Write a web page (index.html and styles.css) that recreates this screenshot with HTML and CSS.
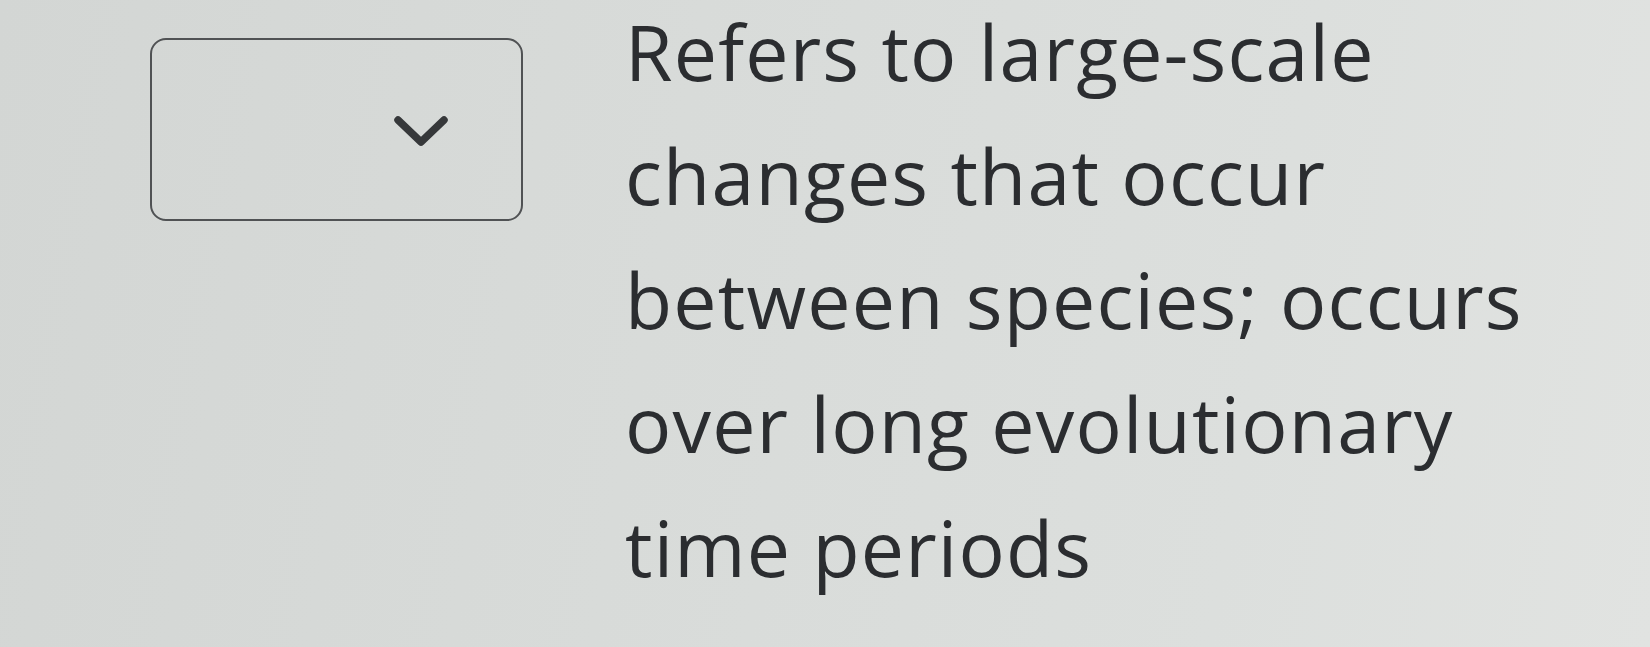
FILE: index.html
```html
<!DOCTYPE html>
<html lang="en">
<head>
<meta charset="utf-8">
<title>Matching question</title>
<link rel="stylesheet" href="styles.css">
</head>
<body>
<main class="question">
  <div class="select" role="combobox" aria-label="Select answer">
    <svg class="chevron" viewBox="0 0 56 32" width="56" height="32" aria-hidden="true">
      <polyline points="5,5 28,27 51,5" fill="none" stroke="#36383a" stroke-width="7.5" stroke-linecap="round" stroke-linejoin="round"/>
    </svg>
  </div>
  <p class="prompt">Refers to large-scale changes that occur between species; occurs over long evolutionary time periods</p>
</main>
</body>
</html>
```
FILE: styles.css
```css
html, body {
  margin: 0;
  padding: 0;
  height: 100%;
}
body {
  background: linear-gradient(100deg, #d3d6d4 0%, #d8dbd9 40%, #dcdfdd 75%, #e1e3e1 100%);
  font-family: "Open Sans", Lato, sans-serif;
  color: #2b2d30;
  overflow: hidden;
}
.question {
  display: flex;
  align-items: flex-start;
  gap: 102px;
  padding-left: 150px;
}
.select {
  flex: 0 0 auto;
  box-sizing: border-box;
  width: 373px;
  height: 183px;
  margin-top: 38px;
  border: 2px solid #505254;
  border-radius: 16px;
  display: flex;
  align-items: center;
  justify-content: flex-end;
  padding-right: 72px;
}
.chevron {
  display: block;
  margin-top: 2px;
}
.prompt {
  margin: -10px 0 0;
  width: 940px;
  font-size: 77px;
  line-height: 124px;
  letter-spacing: 1.2px;
  font-weight: 400;
  font-variant-ligatures: none;
}
```
